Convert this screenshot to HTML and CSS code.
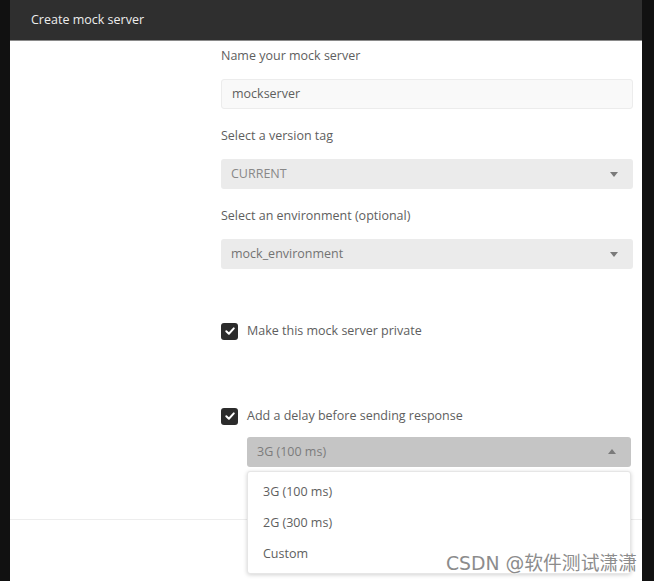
FILE: index.html
```html
<!DOCTYPE html>
<html lang="en">

<head>
  <meta charset="UTF-8">
  <meta name="viewport" content="width=device-width, initial-scale=1.0">
  <title>Create mock server</title>
  <link rel="stylesheet" href="styles.css">
</head>

<body>
  <div class="modal">
    <div class="modal-header">Create mock server</div>

    <div class="modal-body">
      <div class="field">
        <label class="label">Name your mock server</label>
        <div class="input">mockserver</div>
      </div>

      <div class="field">
        <label class="label">Select a version tag</label>
        <div class="select muted">CURRENT <span class="arrow down"></span></div>
      </div>

      <div class="field">
        <label class="label">Select an environment (optional)</label>
        <div class="select">mock_environment <span class="arrow down"></span></div>
      </div>

      <div class="check-row private">
        <span class="checkbox">
          <svg viewBox="0 0 12 12" width="12" height="12">
            <path d="M2.3 6.2 L4.9 8.7 L9.8 3.4" fill="none" stroke="#fff" stroke-width="2" stroke-linecap="round" stroke-linejoin="round" />
          </svg>
        </span>
        Make this mock server private
      </div>

      <div class="check-row delay">
        <span class="checkbox">
          <svg viewBox="0 0 12 12" width="12" height="12">
            <path d="M2.3 6.2 L4.9 8.7 L9.8 3.4" fill="none" stroke="#fff" stroke-width="2" stroke-linecap="round" stroke-linejoin="round" />
          </svg>
        </span>
        Add a delay before sending response
      </div>

      <div class="delay-wrap">
        <div class="select open">3G (100 ms) <span class="arrow up"></span></div>
        <ul class="menu">
          <li>3G (100 ms)</li>
          <li>2G (300 ms)</li>
          <li>Custom</li>
        </ul>
      </div>
    </div>

    <div class="modal-footer"></div>
  </div>

  <div class="watermark">CSDN @软件测试潇潇</div>
</body>

</html>
```

FILE: styles.css
```css
* {
  margin: 0;
  padding: 0;
  list-style: none;
  box-sizing: border-box;
}

body {
  background: #111;
  font-family: 'Open Sans', 'Noto Sans', sans-serif;
  font-size: 12.5px;
  color: #5e5e5e;
  height: 581px;
  overflow: hidden;
}

.modal {
  width: 632px;
  height: 581px;
  margin-left: 10px;
  background: #fff;
}

.modal-header {
  height: 41px;
  line-height: 40px;
  padding-left: 21px;
  background: #2f2f2f;
  border-bottom: 1px solid #8a8a8a;
  color: #ededed;
  font-size: 12.5px;
}

.modal-body {
  padding: 6px 9px 52px 211px;
  border-bottom: 1px solid #ededed;
}

.field {
  margin-bottom: 18px;
}

.label {
  display: block;
  line-height: 18px;
  margin-bottom: 14px;
}

.input {
  height: 30px;
  line-height: 28px;
  padding-left: 10px;
  background: #f9f9f9;
  border: 1px solid #ececec;
  border-radius: 3px;
}

.select {
  height: 30px;
  line-height: 30px;
  padding-left: 10px;
  background: #ebebeb;
  border-radius: 3px;
  color: #737373;

  position: relative;
}

.select.muted {
  color: #888;
}

.arrow {
  position: absolute;
  right: 15px;
  top: 13px;
  width: 0;
  height: 0;
  border-left: 4px solid transparent;
  border-right: 4px solid transparent;
}

.arrow.down {
  border-top: 5px solid #7a7a7a;
}

.arrow.up {
  top: 12px;
  border-bottom: 5px solid #7a7a7a;
}

.check-row {
  display: flex;
  align-items: center;
  gap: 9px;
  line-height: 18px;
}

/* margins collapse with .field margin-bottom */
.check-row.private {
  margin-top: 53px;
}

.check-row.delay {
  margin-top: 67px;
}

.checkbox {
  width: 17px;
  height: 17px;
  border-radius: 3px;
  background: #2b2b2b;
  display: flex;
  align-items: center;
  justify-content: center;
}

.delay-wrap {
  margin: 12px 2px 0 26px;
  position: relative;
}

.select.open {
  background: #c5c5c5;
  color: #7c7c7c;
}

.menu {
  position: absolute;
  left: 0;
  right: 0;
  top: 34px;
  padding: 4px 0;
  background: #fff;
  border: 1px solid #e6e6e6;
  border-radius: 3px;
  box-shadow: 0 1px 4px rgba(0, 0, 0, 0.18);
  z-index: 2;
}

.menu li {
  height: 31px;
  line-height: 31px;
  padding-left: 15px;
}

.modal-footer {
  height: 61px;
}

.watermark {
  position: absolute;
  right: 17px;
  bottom: 6px;
  font-family: 'DejaVu Sans', 'Noto Sans CJK SC', sans-serif;
  font-size: 18.8px;
  color: #8c8c8c;
  text-shadow: 0 0 2px #fff, 0 0 2px #fff;
  z-index: 3;
}
```
